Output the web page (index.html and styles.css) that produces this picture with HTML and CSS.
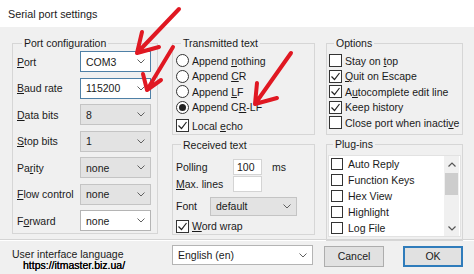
FILE: index.html
```html
<!DOCTYPE html>
<html lang="en">
<head>
    <meta charset="UTF-8">
    <title>Serial port settings</title>
    <link rel="stylesheet" href="styles.css">
</head>
<body>
<div class="window">
    <div class="titlebar">Serial port settings</div>

    <div class="content">
        <div class="groups">
            <fieldset class="group port-config">
                <legend>Port configuration</legend>
                <div class="form-grid">
                    <span><u>P</u>ort</span>
                    <div class="combo focus"><span>COM3</span><svg class="chev" viewBox="0 0 8 5"><polyline points="0.5,0.5 4,4 7.5,0.5"/></svg></div>
                    <span><u>B</u>aud rate</span>
                    <div class="combo focus"><span>115200</span><svg class="chev" viewBox="0 0 8 5"><polyline points="0.5,0.5 4,4 7.5,0.5"/></svg></div>
                    <span><u>D</u>ata bits</span>
                    <div class="combo list"><span>8</span><svg class="chev" viewBox="0 0 8 5"><polyline points="0.5,0.5 4,4 7.5,0.5"/></svg></div>
                    <span><u>S</u>top bits</span>
                    <div class="combo list"><span>1</span><svg class="chev" viewBox="0 0 8 5"><polyline points="0.5,0.5 4,4 7.5,0.5"/></svg></div>
                    <span>Pa<u>r</u>ity</span>
                    <div class="combo list"><span>none</span><svg class="chev" viewBox="0 0 8 5"><polyline points="0.5,0.5 4,4 7.5,0.5"/></svg></div>
                    <span><u>F</u>low control</span>
                    <div class="combo list"><span>none</span><svg class="chev" viewBox="0 0 8 5"><polyline points="0.5,0.5 4,4 7.5,0.5"/></svg></div>
                    <span>F<u>o</u>rward</span>
                    <div class="combo edit"><span>none</span><svg class="chev" viewBox="0 0 8 5"><polyline points="0.5,0.5 4,4 7.5,0.5"/></svg></div>
                </div>
            </fieldset>

            <div class="column mid">
                <fieldset class="group transmitted">
                    <legend>Transmitted text</legend>
                    <div class="opt"><span class="box radio"></span><span>Append <u>n</u>othing</span></div>
                    <div class="opt"><span class="box radio"></span><span>Append <u>C</u>R</span></div>
                    <div class="opt"><span class="box radio"></span><span>Append <u>L</u>F</span></div>
                    <div class="opt"><span class="box radio on"></span><span>Append C<u>R</u>-LF</span></div>
                    <div class="opt echo"><span class="box check"><svg viewBox="0 0 11 11"><polyline points="1.5,5.5 4.5,8.5 9.5,2"/></svg></span><span>Local <u>e</u>cho</span></div>
                </fieldset>

                <fieldset class="group received">
                    <legend>Received text</legend>
                    <div class="field">
                        <span class="field-label">Polling</span>
                        <div class="edit-box">100</div>
                        <span class="unit">ms</span>
                    </div>
                    <div class="field gap-small">
                        <span class="field-label"><u>M</u>ax. lines</span>
                        <div class="edit-box"></div>
                    </div>
                    <div class="field font-row">
                        <span class="field-label short">Font</span>
                        <div class="combo list font-combo"><span>default</span><svg class="chev" viewBox="0 0 8 5"><polyline points="0.5,0.5 4,4 7.5,0.5"/></svg></div>
                    </div>
                    <div class="opt wrap"><span class="box check"><svg viewBox="0 0 11 11"><polyline points="1.5,5.5 4.5,8.5 9.5,2"/></svg></span><span><u>W</u>ord wrap</span></div>
                </fieldset>
            </div>

            <div class="column right">
                <fieldset class="group options">
                    <legend>Options</legend>
                    <div class="opt"><span class="box check"></span><span>Stay on <u>t</u>op</span></div>
                    <div class="opt"><span class="box check"><svg viewBox="0 0 11 11"><polyline points="1.5,5.5 4.5,8.5 9.5,2"/></svg></span><span><u>Q</u>uit on Escape</span></div>
                    <div class="opt"><span class="box check"><svg viewBox="0 0 11 11"><polyline points="1.5,5.5 4.5,8.5 9.5,2"/></svg></span><span>A<u>u</u>tocomplete edit line</span></div>
                    <div class="opt"><span class="box check"><svg viewBox="0 0 11 11"><polyline points="1.5,5.5 4.5,8.5 9.5,2"/></svg></span><span>Keep history</span></div>
                    <div class="opt"><span class="box check"></span><span>Close port when inacti<u>v</u>e</span></div>
                </fieldset>

                <fieldset class="group plugins">
                    <legend>Plug-ins</legend>
                    <div class="listbox">
                        <div class="items">
                            <div class="item"><span class="box check"></span><span>Auto Reply</span></div>
                            <div class="item"><span class="box check"></span><span>Function Keys</span></div>
                            <div class="item"><span class="box check"></span><span>Hex View</span></div>
                            <div class="item"><span class="box check"></span><span>Highlight</span></div>
                            <div class="item"><span class="box check"></span><span>Log File</span></div>
                        </div>
                        <div class="scrollbar">
                            <div class="sb-arrow"><svg viewBox="0 0 8 5"><polyline points="0.5,4.5 4,1 7.5,4.5"/></svg></div>
                            <div class="sb-thumb"></div>
                            <div class="sb-track"></div>
                            <div class="sb-arrow"><svg viewBox="0 0 8 5"><polyline points="0.5,0.5 4,4 7.5,0.5"/></svg></div>
                        </div>
                    </div>
                </fieldset>
            </div>
        </div>
    </div>

    <div class="separator"></div>

    <div class="footer">
        <div class="lang-label">
            <div>User interface language</div>
            <div class="url">https://itmaster.biz.ua/</div>
        </div>
        <div class="combo edit lang-combo"><span>English (en)</span><svg class="chev" viewBox="0 0 8 5"><polyline points="0.5,0.5 4,4 7.5,0.5"/></svg></div>
        <div class="btn">Cancel</div>
        <div class="btn default">OK</div>
    </div>

    <!-- red hand-drawn arrows on top of the screenshot -->
    <svg class="arrows" viewBox="0 0 474 274">
        <path d="M179 9 L137 53 M137 53 L142 32 M137 53 L159 47"/>
        <path d="M173 47 L147 90 M147 90 L143 74 M147 90 L161 80"/>
        <path d="M291 53 L255 104 M255 104 L257 83 M255 104 L277 98"/>
    </svg>
</div>
</body>
</html>
```

FILE: styles.css
```css
* {
    box-sizing: border-box;
}

body {
    margin: 0;
}

.window {
    position: relative;
    width: 474px;
    height: 274px;
    overflow: hidden;
    background-color: #f0f0f0;
    font-family: "Liberation Sans", Arial, sans-serif;
    font-size: 10.5px;
    color: #1a1a1a;
}

.titlebar {
    height: 27px;
    padding-left: 8px;
    line-height: 28px;
    font-size: 10.8px;
    background-color: #fff;
}

.content {
    padding: 9px 0 0 12px;
}

.groups {
    display: flex;
    align-items: stretch;
    height: 198px;
}

.column {
    display: flex;
    flex-direction: column;
}

.group {
    margin: 0;
    min-width: 0;
    border: 1px solid #d6d6d6;
}

.group legend {
    margin-left: 5px;
    padding: 0 2px;
    line-height: 14px;
}

/* port configuration */
.port-config {
    width: 146px;
    padding: 1px 6px 0 4px;
}

.form-grid {
    display: grid;
    grid-template-columns: 63px 71px;
    grid-auto-rows: 21px;
    row-gap: 5.5px;
    align-items: center;
}

.combo {
    display: flex;
    align-items: center;
    justify-content: space-between;
    height: 21px;
    padding: 0 5px 0 5px;
    border: 1px solid #bcbcbc;
    background-color: #fff;
}

.combo.focus {
    border-color: #4f80a6;
}

.combo.list {
    background-color: #e3e3e3;
    border-color: #c4c4c4;
}

.combo.edit {
    border-color: #b4b4b4;
}

.chev {
    width: 8px;
    height: 5px;
    fill: none;
    stroke: #606060;
    stroke-width: 1;
}

/* middle column */
.mid {
    width: 143px;
    margin-left: 14px;
}

.transmitted {
    padding: 3px 4px 0 3px;
}

.opt {
    display: flex;
    align-items: center;
    gap: 3px;
    height: 15.5px;
    white-space: nowrap;
}

.opt.echo {
    margin-top: 3px;
}

.box {
    display: flex;
    align-items: center;
    justify-content: center;
    flex: none;
    width: 13px;
    height: 13px;
    border: 1px solid #333;
    background-color: #fff;
}

.box svg {
    width: 11px;
    height: 11px;
    fill: none;
    stroke: #222;
    stroke-width: 1.2;
}

.radio {
    border-radius: 50%;
}

.radio.on::after {
    content: "";
    width: 7px;
    height: 7px;
    border-radius: 50%;
    background-color: #222;
}

.received {
    flex: 1;
    margin-top: 3px;
    padding: 7px 4px 0 3px;
}

.field {
    display: flex;
    align-items: center;
    height: 16px;
}

.field.gap-small {
    margin-top: 1px;
}

.field.font-row {
    height: 19px;
    margin-top: 5px;
}

.field-label {
    width: 57px;
}

.field-label.short {
    width: 34px;
}

.edit-box {
    width: 29px;
    height: 16px;
    padding-left: 3px;
    line-height: 14px;
    border: 1px solid #d4d4d4;
    background-color: #fff;
}

.unit {
    margin-left: 10px;
}

.font-combo {
    width: 87px;
    height: 19px;
}

.opt.wrap {
    margin-top: 3px;
    height: 15px;
}

/* right column */
.right {
    width: 137px;
    margin-left: 11px;
}

.options {
    padding: 3px 4px 3px 2px;
}

.plugins {
    flex: 1;
    display: flex;
    flex-direction: column;
    margin-top: 2.5px;
    padding: 4px 1px 3px 1px;
}

.listbox {
    flex: 1;
    display: flex;
    border: 1px solid #e2e2e2;
    background-color: #fff;
    overflow: hidden;
}

.items {
    flex: 1;
    overflow: hidden;
}

.item {
    display: flex;
    align-items: center;
    gap: 5px;
    height: 16px;
    padding-left: 2px;
    white-space: nowrap;
}

.item .box {
    width: 12px;
    height: 12px;
}

.scrollbar {
    display: flex;
    flex-direction: column;
    width: 15px;
    margin-right: 1px;
    background-color: #f0f0f0;
}

.sb-arrow {
    display: flex;
    align-items: center;
    justify-content: center;
    height: 16px;
}

.sb-arrow svg {
    width: 8px;
    height: 5px;
    fill: none;
    stroke: #555;
    stroke-width: 1.2;
}

.sb-thumb {
    height: 22px;
    margin: 1px 1px 0;
    background-color: #cdcdcd;
}

.sb-track {
    flex: 1;
}

/* bottom part */
.separator {
    height: 2px;
    margin-top: 5px;
    border-top: 1px solid #d4d4d4;
    border-bottom: 1px solid #fff;
}

.footer {
    display: flex;
    align-items: flex-start;
    padding-left: 12px;
}

.lang-label {
    width: 160px;
    margin-top: 8px;
    line-height: 11px;
}

.url {
    padding-left: 11px;
    color: #000;
    text-shadow: 0 0 0.4px #000;
}

.lang-combo {
    width: 141px;
    height: 20px;
    margin-top: 4px;
}

.btn {
    width: 60px;
    height: 21px;
    margin-top: 5px;
    margin-left: 11px;
    line-height: 19px;
    text-align: center;
    border: 1px solid #adadad;
    background-color: #e1e1e1;
}

.btn.default {
    margin-left: 19px;
    border: 2px solid #2f7cbb;
    line-height: 17px;
}

.arrows {
    position: absolute;
    top: 0;
    left: 0;
    width: 474px;
    height: 274px;
    pointer-events: none;
    fill: none;
    stroke: #e01822;
    stroke-width: 4;
    stroke-linecap: round;
    stroke-linejoin: round;
}
```
